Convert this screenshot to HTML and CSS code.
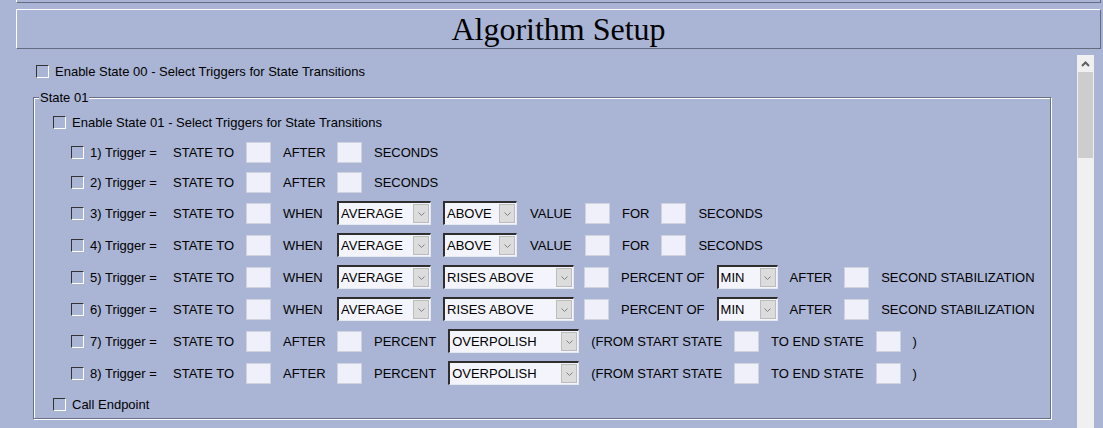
FILE: index.html
```html
<!DOCTYPE html>
<html>
<head>
	<meta charset="utf-8"/>
	<title>Algorithm Setup</title>
	<link rel="stylesheet" href="styles.css">
</head>
<body>
<div class="page">
	<div class="topbar"></div>
	<div class="titlebox"><h1>Algorithm Setup</h1></div>
	<div class="panel">
		<div class="content">
			<div class="row first"><label class="chk"><input type="checkbox">Enable State 00 - Select Triggers for State Transitions</label></div>

			<div class="state">
				<span class="legend">State 01</span>
				<div class="rows">
					<div class="row sub"><label class="chk"><input type="checkbox">Enable State 01 - Select Triggers for State Transitions</label></div>

					<div class="row trig">
						<label class="chk"><input type="checkbox">1) Trigger =</label>
						<span class="st">STATE TO</span><input class="num" type="text">
						<span class="w42">AFTER</span><input class="num" type="text">
						<span>SECONDS</span>
					</div>
					<div class="row trig">
						<label class="chk"><input type="checkbox">2) Trigger =</label>
						<span class="st">STATE TO</span><input class="num" type="text">
						<span class="w42">AFTER</span><input class="num" type="text">
						<span>SECONDS</span>
					</div>
					<div class="row trig tall">
						<label class="chk"><input type="checkbox">3) Trigger =</label>
						<span class="st">STATE TO</span><input class="num" type="text">
						<span class="w42">WHEN</span>
						<span class="sel s94"><select><option>AVERAGE</option></select><span class="btn"><svg width="7" height="4" viewBox="0 0 7 4"><path d="M0.5 0.5 L3.5 3.5 L6.5 0.5" fill="none" stroke="#808080"/></svg></span></span>
						<span class="sel s74"><select><option>ABOVE</option></select><span class="btn"><svg width="7" height="4" viewBox="0 0 7 4"><path d="M0.5 0.5 L3.5 3.5 L6.5 0.5" fill="none" stroke="#808080"/></svg></span></span>
						<span class="val">VALUE</span><input class="num" type="text">
						<span>FOR</span><input class="num" type="text">
						<span>SECONDS</span>
					</div>
					<div class="row trig tall">
						<label class="chk"><input type="checkbox">4) Trigger =</label>
						<span class="st">STATE TO</span><input class="num" type="text">
						<span class="w42">WHEN</span>
						<span class="sel s94"><select><option>AVERAGE</option></select><span class="btn"><svg width="7" height="4" viewBox="0 0 7 4"><path d="M0.5 0.5 L3.5 3.5 L6.5 0.5" fill="none" stroke="#808080"/></svg></span></span>
						<span class="sel s74"><select><option>ABOVE</option></select><span class="btn"><svg width="7" height="4" viewBox="0 0 7 4"><path d="M0.5 0.5 L3.5 3.5 L6.5 0.5" fill="none" stroke="#808080"/></svg></span></span>
						<span class="val">VALUE</span><input class="num" type="text">
						<span>FOR</span><input class="num" type="text">
						<span>SECONDS</span>
					</div>
					<div class="row trig tall">
						<label class="chk"><input type="checkbox">5) Trigger =</label>
						<span class="st">STATE TO</span><input class="num" type="text">
						<span class="w42">WHEN</span>
						<span class="sel s94"><select><option>AVERAGE</option></select><span class="btn"><svg width="7" height="4" viewBox="0 0 7 4"><path d="M0.5 0.5 L3.5 3.5 L6.5 0.5" fill="none" stroke="#808080"/></svg></span></span>
						<span class="sel s131"><select><option>RISES ABOVE</option></select><span class="btn"><svg width="7" height="4" viewBox="0 0 7 4"><path d="M0.5 0.5 L3.5 3.5 L6.5 0.5" fill="none" stroke="#808080"/></svg></span></span>
						<input class="num tight" type="text">
						<span>PERCENT OF</span>
						<span class="sel s61"><select><option>MIN</option></select><span class="btn"><svg width="7" height="4" viewBox="0 0 7 4"><path d="M0.5 0.5 L3.5 3.5 L6.5 0.5" fill="none" stroke="#808080"/></svg></span></span>
						<span>AFTER</span><input class="num" type="text">
						<span>SECOND STABILIZATION</span>
					</div>
					<div class="row trig tall">
						<label class="chk"><input type="checkbox">6) Trigger =</label>
						<span class="st">STATE TO</span><input class="num" type="text">
						<span class="w42">WHEN</span>
						<span class="sel s94"><select><option>AVERAGE</option></select><span class="btn"><svg width="7" height="4" viewBox="0 0 7 4"><path d="M0.5 0.5 L3.5 3.5 L6.5 0.5" fill="none" stroke="#808080"/></svg></span></span>
						<span class="sel s131"><select><option>RISES ABOVE</option></select><span class="btn"><svg width="7" height="4" viewBox="0 0 7 4"><path d="M0.5 0.5 L3.5 3.5 L6.5 0.5" fill="none" stroke="#808080"/></svg></span></span>
						<input class="num tight" type="text">
						<span>PERCENT OF</span>
						<span class="sel s61"><select><option>MIN</option></select><span class="btn"><svg width="7" height="4" viewBox="0 0 7 4"><path d="M0.5 0.5 L3.5 3.5 L6.5 0.5" fill="none" stroke="#808080"/></svg></span></span>
						<span>AFTER</span><input class="num" type="text">
						<span>SECOND STABILIZATION</span>
					</div>
					<div class="row trig tall">
						<label class="chk"><input type="checkbox">7) Trigger =</label>
						<span class="st">STATE TO</span><input class="num" type="text">
						<span class="w42">AFTER</span><input class="num" type="text">
						<span>PERCENT</span>
						<span class="sel s131"><select><option>OVERPOLISH</option></select><span class="btn"><svg width="7" height="4" viewBox="0 0 7 4"><path d="M0.5 0.5 L3.5 3.5 L6.5 0.5" fill="none" stroke="#808080"/></svg></span></span>
						<span>(FROM START STATE</span><input class="num" type="text">
						<span>TO END STATE</span><input class="num" type="text">
						<span>)</span>
					</div>
					<div class="row trig tall">
						<label class="chk"><input type="checkbox">8) Trigger =</label>
						<span class="st">STATE TO</span><input class="num" type="text">
						<span class="w42">AFTER</span><input class="num" type="text">
						<span>PERCENT</span>
						<span class="sel s131"><select><option>OVERPOLISH</option></select><span class="btn"><svg width="7" height="4" viewBox="0 0 7 4"><path d="M0.5 0.5 L3.5 3.5 L6.5 0.5" fill="none" stroke="#808080"/></svg></span></span>
						<span>(FROM START STATE</span><input class="num" type="text">
						<span>TO END STATE</span><input class="num" type="text">
						<span>)</span>
					</div>

					<div class="row sub"><label class="chk"><input type="checkbox">Call Endpoint</label></div>
				</div>
			</div>
		</div>
		<div class="vscroll">
			<div class="up"><svg width="9" height="6" viewBox="0 0 9 6"><path d="M1 5 L4.5 1.5 L8 5" fill="none" stroke="#606060" stroke-width="2"/></svg></div>
			<div class="thumb"></div>
		</div>
	</div>
</div>
</body>
</html>
```

FILE: styles.css
```css
*{
	margin: 0;
	padding: 0;
	box-sizing: border-box;
}
html,body{
	overflow: hidden;
}
body{
	background: #aab5d5;
	font: 13px "Liberation Sans", Arial, sans-serif;
	color: #000;
}
.page{
	padding: 0 2px 0 16px;
}
.topbar{
	height: 3px;
	border: 1px solid #646c82;
	border-top: 0;
	border-left-color: #fff;
}
.titlebox{
	margin-top: 6px;
	height: 40px;
	border: 1px solid #646c82;
	border-top-color: #fff;
	border-left-color: #fff;
}
.titlebox h1{
	font: normal 32px/38px "Liberation Serif", "Times New Roman", serif;
	text-align: center;
}
.panel{
	display: flex;
	margin: 6px 7px 0 0;
	height: 373px;
}
.content{
	flex: 1;
	padding: 5px 0 0 17px;
	overflow: hidden;
}
.vscroll{
	flex: none;
	width: 17px;
	background: #f0f0f0;
}
.vscroll .up{
	height: 17px;
	display: flex;
	align-items: center;
	justify-content: center;
}
.vscroll .thumb{
	height: 86px;
	margin: 0 1px;
	background: #cdcdcd;
}

/* rows */
.row{
	display: flex;
	align-items: center;
	gap: 12px;
	height: 22px;
	white-space: nowrap;
}
.row.tall{
	height: 24px;
}
.row.first{
	margin-left: 3px;
}
.chk{
	display: flex;
	align-items: center;
	gap: 6px;
	flex: none;
}
input[type=checkbox]{
	appearance: none;
	-webkit-appearance: none;
	width: 13px;
	height: 13px;
	border: 1px solid;
	border-color: #333 #fff #fff #333;
	background: transparent;
	flex: none;
}

/* state group */
.state{
	margin: 15px 26px 0 0;
	border: 1px solid #687088;
	box-shadow: inset 1px 1px 0 #fff, 1px 1px 0 #fff;
	padding-bottom: 3px;
}
.state .legend{
	display: block;
	width: fit-content;
	margin: -8px 0 0 5px;
	padding: 0 1px;
	line-height: 15px;
	background: #aab5d5;
}
.rows{
	margin-top: 6px;
	display: flex;
	flex-direction: column;
	gap: 8px;
}
.row.sub{
	margin-left: 19px;
}
.row.trig{
	margin-left: 37px;
}
.trig .chk{
	width: 90px;
}
.st{
	width: 61px;
	min-width: 0;
}
.w42{
	width: 42px;
	min-width: 0;
}
.val{
	width: 43px;
	margin-left: 1px;
}

/* fields */
input.num{
	flex: none;
	width: 25px;
	height: 21px;
	border: 1px solid #cfd3e0;
	background: #eff0fa;
}
input.num.tight{
	margin-left: -2px;
}
.sel{
	flex: none;
	display: flex;
	height: 24px;
	border-style: solid;
	border-width: 2px 1px 1px 2px;
	border-color: #2e2e2e #e6e8ef #e6e8ef #2e2e2e;
	background: #f4f5fc;
}
.sel select{
	appearance: none;
	-webkit-appearance: none;
	flex: 1;
	min-width: 0;
	border: 0;
	outline: none;
	background: none;
	padding-left: 2px;
	font: inherit;
	color: #000;
}
.sel .btn{
	width: 16px;
	margin: 1px;
	background: #dcdcdc;
	border: 1px solid #bcbcbc;
	display: flex;
	align-items: center;
	justify-content: center;
}
.s94{ width: 94px; }
.s74{ width: 74px; }
.s131{ width: 131px; }
.s61{ width: 61px; }
```
